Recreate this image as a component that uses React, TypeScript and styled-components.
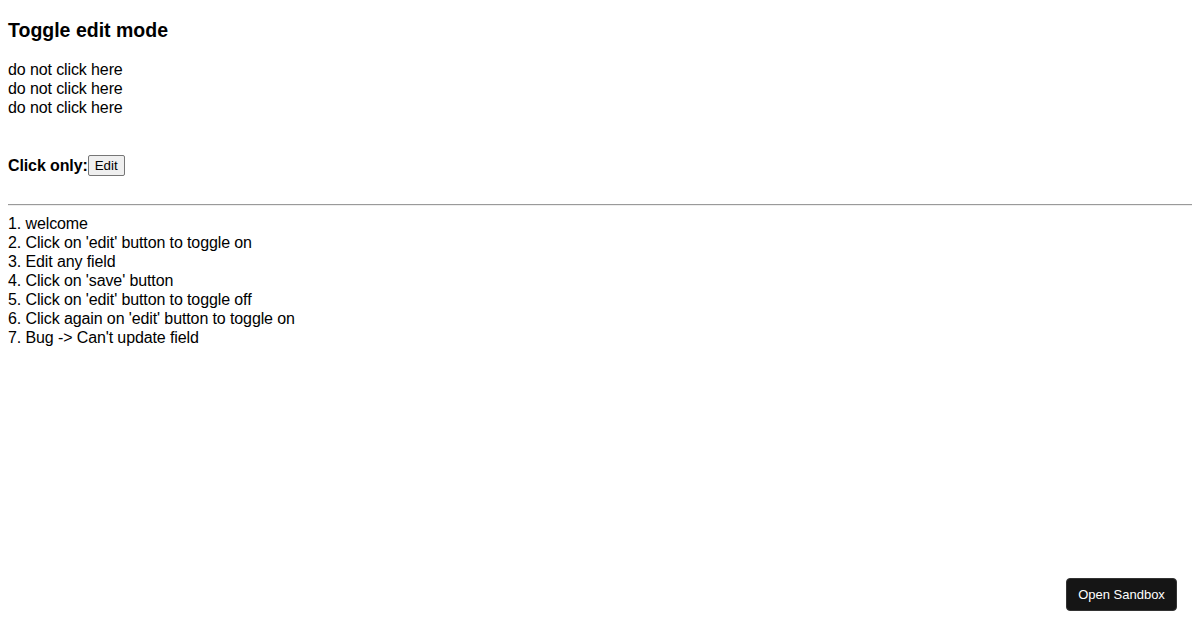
import styled, { createGlobalStyle } from 'styled-components';

const GlobalStyle = createGlobalStyle`
  html, body {
    margin: 0;
    background: #fff;
  }
  body {
    padding: 8px;
    font-family: "Liberation Sans", Arial, sans-serif;
    font-size: 16px;
    letter-spacing: -0.11px;
    color: #000;
  }
`;

const Page = styled.div`
  display: flex;
  flex-direction: column;
`;

const Title = styled.h3`
  font-size: 19.5px;
  font-weight: bold;
  letter-spacing: 0;
  margin: 10.72px 0 18.72px;
  line-height: normal;
`;

const Field = styled.div`
  line-height: 19px;
`;

const Spacer = styled.div`
  height: 16px;
`;

const EditRow = styled.h4`
  display: flex;
  align-items: center;
  font-size: 16px;
  font-weight: bold;
  margin: 21.28px 0 18.8px;
  height: 22px;
`;

const EditButton = styled.button`
  font-family: "Liberation Sans", Arial, sans-serif;
  font-size: 13.33px;
  font-weight: normal;
  letter-spacing: 0;
  padding: 1px 6px;
  height: 21px;
  background: #efefef;
  color: #000;
  border: 1px solid #767676;
  border-radius: 2px;
  cursor: pointer;
`;

const Rule = styled.hr`
  margin: 8px 0;
  border: none;
  border-top: 1px solid #9a9a9a;
  border-bottom: 1px solid #eeeeee;
`;

const Steps = styled.div`
  display: flex;
  flex-direction: column;
`;

const Step = styled.div`
  line-height: 19px;
`;

const SandboxButton = styled.a`
  position: fixed;
  right: 23px;
  bottom: 19px;
  display: flex;
  align-items: center;
  justify-content: center;
  width: 111px;
  height: 33px;
  box-sizing: border-box;
  background: #151515;
  color: #fff;
  font-family: "Liberation Sans", Arial, sans-serif;
  font-size: 13px;
  letter-spacing: 0;
  border-radius: 4px;
  border: 1px solid #333;
  text-decoration: none;
  cursor: pointer;
`;

const steps = [
  'welcome',
  "Click on 'edit' button to toggle on",
  'Edit any field',
  "Click on 'save' button",
  "Click on 'edit' button to toggle off",
  "Click again on 'edit' button to toggle on",
  "Bug -> Can't update field",
];

export default function App() {
  return (
    <>
      <GlobalStyle />
      <Page>
        <Title>Toggle edit mode</Title>
        <Field>do not click here</Field>
        <Field>do not click here</Field>
        <Field>do not click here</Field>
        <Spacer />
        <EditRow>
          Click only:<EditButton>Edit</EditButton>
        </EditRow>
        <Rule />
        <Steps>
          {steps.map((s, i) => (
            <Step key={i}>
              {i + 1}. {s}
            </Step>
          ))}
        </Steps>
      </Page>
      <SandboxButton>Open Sandbox</SandboxButton>
    </>
  );
}
